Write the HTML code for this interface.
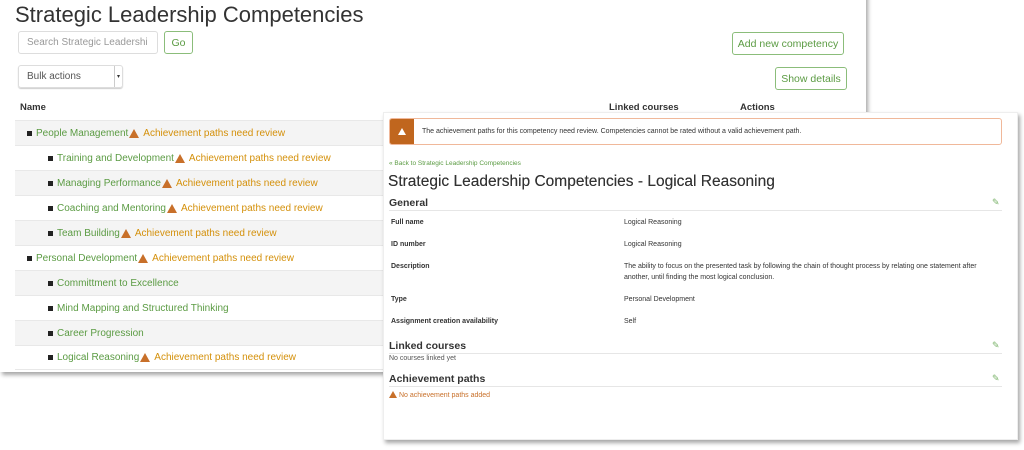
<!DOCTYPE html>
<html><head><meta charset="utf-8"><style>
*{box-sizing:border-box;margin:0;padding:0}
body{width:1024px;height:450px;background:#fff;font-family:"Liberation Sans",sans-serif;position:relative;overflow:hidden;color:#333}
.abs{position:absolute}
#back{left:0;top:-10px;width:866px;height:382px;background:#fff;box-shadow:2px 3px 4px rgba(0,0,0,.35)}
.h1{left:15px;top:2px;font-size:22px;color:#333}
.inp{border:1px solid #ddd;border-radius:3px;font-size:10px;color:#999;padding:0 8px;display:flex;align-items:center}
.btn{border:1px solid #8bbd7a;border-radius:3px;color:#5b9b43;font-size:10.5px;display:flex;align-items:center;justify-content:center;background:#fff}
.row{left:15px;width:851px;height:25px;font-size:10px;display:flex;align-items:center;border-top:1px solid #e8e8e8}
.row.s{background:#f4f4f4}
.g{color:#5b9b43}.o{color:#d4900a}
.b{width:5px;height:5px;background:#222;display:inline-block;margin-right:4px}
.tri{display:inline-block;width:0;height:0;border-left:5px solid transparent;border-right:5px solid transparent;border-bottom:9px solid #c8702a;margin:0 4px 0 1px;vertical-align:-1px}
#front{left:383px;top:112px;width:635px;height:328px;background:#fff;box-shadow:2px 3px 4px rgba(0,0,0,.35);border:1px solid #eee}
.lbl{font-size:7px;font-weight:bold;color:#333}
.val{font-size:7px;color:#333;line-height:11px}
.sec{font-size:10.5px;font-weight:bold;color:#333}
.line{height:1px;background:#e6e6e6}
.pen{color:#7bb36a;font-size:9px}
</style></head><body>
<div id="back" class="abs">
 <div class="abs h1" style="top:12px">Strategic Leadership Competencies</div>
 <div class="abs inp" style="left:18px;top:41px;width:140px;height:23px">Search Strategic Leadershi</div>
 <div class="abs btn" style="left:164px;top:41px;width:29px;height:23px">Go</div>
 <div class="abs inp" style="left:18px;top:75px;width:105px;height:23px;color:#555;box-shadow:0 1px 1px #ccc">Bulk actions<span style="position:absolute;right:0;top:0;width:8px;height:21px;border-left:1px solid #ccc;font-size:6px;color:#333;display:flex;align-items:center;justify-content:center">▾</span></div>
 <div class="abs btn" style="left:732px;top:42px;width:112px;height:23px">Add new competency</div>
 <div class="abs btn" style="left:775px;top:77px;width:72px;height:23px">Show details</div>
 <div class="abs" style="left:20px;top:112px;font-size:9.5px;font-weight:bold">Name</div>
 <div class="abs" style="left:609px;top:112px;font-size:9.5px;font-weight:bold">Linked courses</div>
 <div class="abs" style="left:740px;top:112px;font-size:9.5px;font-weight:bold">Actions</div>
 <div class="abs row s" style="top:130px;padding-left:12px"><span class="b"></span><span class="g">People Management</span><span class="tri"></span><span class="o">Achievement paths need review</span></div>
 <div class="abs row" style="top:155px;padding-left:33px"><span class="b"></span><span class="g">Training and Development</span><span class="tri"></span><span class="o">Achievement paths need review</span></div>
 <div class="abs row s" style="top:180px;padding-left:33px"><span class="b"></span><span class="g">Managing Performance</span><span class="tri"></span><span class="o">Achievement paths need review</span></div>
 <div class="abs row" style="top:205px;padding-left:33px"><span class="b"></span><span class="g">Coaching and Mentoring</span><span class="tri"></span><span class="o">Achievement paths need review</span></div>
 <div class="abs row s" style="top:230px;padding-left:33px"><span class="b"></span><span class="g">Team Building</span><span class="tri"></span><span class="o">Achievement paths need review</span></div>
 <div class="abs row" style="top:255px;padding-left:12px"><span class="b"></span><span class="g">Personal Development</span><span class="tri"></span><span class="o">Achievement paths need review</span></div>
 <div class="abs row s" style="top:280px;padding-left:33px"><span class="b"></span><span class="g">Committment to Excellence</span></div>
 <div class="abs row" style="top:305px;padding-left:33px"><span class="b"></span><span class="g">Mind Mapping and Structured Thinking</span></div>
 <div class="abs row s" style="top:330px;padding-left:33px"><span class="b"></span><span class="g">Career Progression</span></div>
 <div class="abs row" style="top:355px;padding-left:33px;border-bottom:1px solid #e8e8e8"><span class="b"></span><span class="g">Logical Reasoning</span><span class="tri"></span><span class="o">Achievement paths need review</span></div>
</div>
<div id="front" class="abs">
 <div class="abs" style="left:5px;top:5px;width:613px;height:27px;border:1px solid #f0b89a;border-radius:3px;display:flex;align-items:center;font-size:7px;color:#333">
  <div style="width:24px;height:25px;background:#c0661e;display:flex;align-items:center;justify-content:center;margin-right:8px;border-radius:2px 0 0 2px"><span style="width:0;height:0;border-left:4px solid transparent;border-right:4px solid transparent;border-bottom:7px solid #fff"></span></div>
  The achievement paths for this competency need review. Competencies cannot be rated without a valid achievement path.</div>
 <div class="abs g" style="left:5px;top:47px;font-size:6.5px">« Back to Strategic Leadership Competencies</div>
 <div class="abs" style="left:4px;top:60px;font-size:15.5px;color:#333;text-shadow:0 0 .3px #333">Strategic Leadership Competencies - Logical Reasoning</div>
 <div class="abs sec" style="left:5px;top:84px">General</div>
 <div class="abs pen" style="left:608px;top:84px">✎</div>
 <div class="abs line" style="left:5px;top:97px;width:613px"></div>
 <div class="abs lbl" style="left:7px;top:106px">Full name</div><div class="abs val" style="left:240px;top:104px">Logical Reasoning</div>
 <div class="abs lbl" style="left:7px;top:128px">ID number</div><div class="abs val" style="left:240px;top:126px">Logical Reasoning</div>
 <div class="abs lbl" style="left:7px;top:150px">Description</div><div class="abs val" style="left:240px;top:148px;width:370px">The ability to focus on the presented task by following the chain of thought process by relating one statement after another, until finding the most logical conclusion.</div>
 <div class="abs lbl" style="left:7px;top:183px">Type</div><div class="abs val" style="left:240px;top:181px">Personal Development</div>
 <div class="abs lbl" style="left:7px;top:205px">Assignment creation availability</div><div class="abs val" style="left:240px;top:203px">Self</div>
 <div class="abs sec" style="left:5px;top:227px">Linked courses</div>
 <div class="abs pen" style="left:608px;top:227px">✎</div>
 <div class="abs line" style="left:5px;top:240px;width:613px"></div>
 <div class="abs val" style="left:5px;top:240px;color:#555">No courses linked yet</div>
 <div class="abs sec" style="left:5px;top:260px">Achievement paths</div>
 <div class="abs pen" style="left:608px;top:260px">✎</div>
 <div class="abs line" style="left:5px;top:273px;width:613px"></div>
 <div class="abs val" style="left:5px;top:277px;color:#c8702a"><span class="tri" style="border-left-width:4px;border-right-width:4px;border-bottom-width:7px;margin:0 2px 0 0"></span>No achievement paths added</div>
</div>
</body></html>
